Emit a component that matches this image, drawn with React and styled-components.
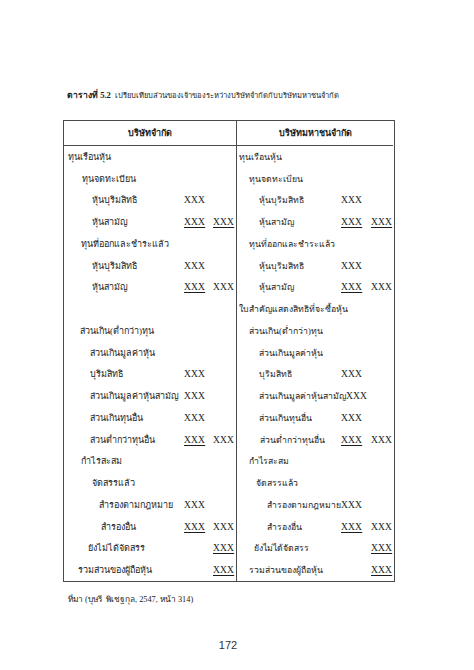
import React from 'react';
import styled, { createGlobalStyle } from 'styled-components';

const GlobalStyle = createGlobalStyle`
  html, body {
    margin: 0;
    padding: 0;
    background: #fff;
  }
  body {
    font-family: "Liberation Serif", serif;
    color: #1c1c1c;
  }
`;

const Page = styled.div`
  width: 474px;
  height: 670px;
  box-sizing: border-box;
  padding: 87px 0 0 63px;
  display: flex;
  flex-direction: column;
`;

const Title = styled.p`
  margin: 0 0 17px 4px;
  height: 16px;
  line-height: 16px;
  font-size: 7.6px;
  white-space: nowrap;

  b {
    font-size: 8.6px;
    font-weight: 700;
    margin-right: 4px;
  }
`;

const Table = styled.div`
  display: grid;
  grid-template-columns: 172px 157px;
  width: 330px;
  border: 1px solid #4a4a4a;
`;

const Side = styled.div`
  display: flex;
  flex-direction: column;
  border-left: ${(p) => (p.$first ? 'none' : '1px solid #4a4a4a')};
`;

const Head = styled.div`
  height: 24px;
  border-bottom: 1px solid #4a4a4a;
  display: flex;
  align-items: center;
  justify-content: center;
  font-size: 9px;
  font-weight: 700;
`;

const Row = styled.div`
  height: 21.75px;
  display: grid;
  grid-template-columns: 1fr ${(p) => p.$cols};
  align-items: center;
  font-size: ${(p) => (p.$narrow ? 8.7 : 9)}px;
  white-space: nowrap;
`;

const Label = styled.span`
  padding-left: ${(p) => p.$indent}px;
`;

const Amount = styled.span`
  font-size: 9.5px;
  letter-spacing: 0.2px;
  text-decoration: ${(p) => (p.$under ? 'underline' : 'none')};
  text-underline-offset: 2px;
`;

const Source = styled.p`
  margin: 11px 0 0 5px;
  font-size: 8.3px;
  line-height: 14px;
  white-space: nowrap;
`;

const PageNo = styled.div`
  margin-top: 32px;
  width: 330px;
  text-align: center;
  font-family: "Liberation Sans", Arial, sans-serif;
  font-size: 11px;
  color: #333;
`;

// [label, indentLeft, indentRight, amt1, amt2]  (u = underlined XXX)
const rows = [
  ['ทุนเรือนหุ้น', 4, 2],
  ['ทุนจดทะเบียน', 18, 12],
  ['หุ้นบุริมสิทธิ', 28, 22, 'x'],
  ['หุ้นสามัญ', 28, 22, 'u', 'u'],
  ['ทุนที่ออกและชำระแล้ว', 17, 12],
  ['หุ้นบุริมสิทธิ', 28, 22, 'x'],
  ['หุ้นสามัญ', 28, 22, 'u', 'x'],
  [null, 0, 2],
  ['ส่วนเกิน(ต่ำกว่า)ทุน', 16, 12],
  ['ส่วนเกินมูลค่าหุ้น', 26, 22],
  ['บุริมสิทธิ', 26, 22, 'x'],
  ['ส่วนเกินมูลค่าหุ้นสามัญ', 26, 22, 'x'],
  ['ส่วนเกินทุนอื่น', 26, 22, 'x'],
  ['ส่วนต่ำกว่าทุนอื่น', 26, 23, 'u', 'x'],
  ['กำไรสะสม', 17, 12],
  ['จัดสรรแล้ว', 28, 19],
  ['สำรองตามกฎหมาย', 35, 30, 'x'],
  ['สำรองอื่น', 37, 30, 'u', 'x'],
  ['ยังไม่ได้จัดสรร', 24, 17, null, 'u'],
  ['รวมส่วนของผู้ถือหุ้น', 14, 12, null, 'u'],
];

const Amt = ({ v }) => (v ? <Amount $under={v === 'u'}>XXX</Amount> : <span />);

function Column({ first, title, cols }) {
  return (
    <Side $first={first}>
      <Head>{title}</Head>
      {rows.map(([label, il, ir, a1, a2], i) => {
        const text = label === null ? (first ? '' : 'ใบสำคัญแสดงสิทธิที่จะซื้อหุ้น') : label;
        return (
          <Row key={i} $cols={cols} $narrow={!first}>
            <Label $indent={first ? il : ir}>{text}</Label>
            <Amt v={a1} />
            <Amt v={a2} />
          </Row>
        );
      })}
    </Side>
  );
}

export default function App() {
  return (
    <Page>
      <GlobalStyle />
      <Title>
        <b>ตารางที่ 5.2</b>เปรียบเทียบส่วนของเจ้าของระหว่างบริษัทจำกัดกับบริษัทมหาชนจำกัด
      </Title>
      <Table>
        <Column first title="บริษัทจำกัด" cols="29px 23px" />
        <Column title="บริษัทมหาชนจำกัด" cols="30px 22px" />
      </Table>
      <Source>ที่มา (บุษรี&nbsp;&nbsp;พิเชฐกุล, 2547, หน้า 314)</Source>
      <PageNo>172</PageNo>
    </Page>
  );
}
